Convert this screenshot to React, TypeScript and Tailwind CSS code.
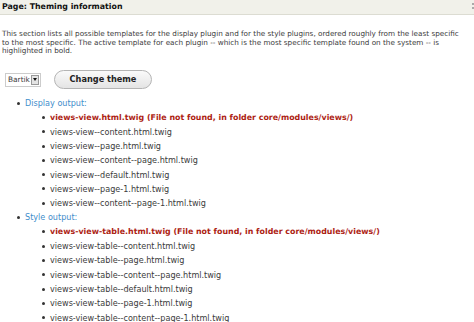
import React from "react";

const display = [
  "views-view--content.html.twig",
  "views-view--page.html.twig",
  "views-view--content--page.html.twig",
  "views-view--default.html.twig",
  "views-view--page-1.html.twig",
  "views-view--content--page-1.html.twig",
];
const style = [
  "views-view-table--content.html.twig",
  "views-view-table--page.html.twig",
  "views-view-table--content--page.html.twig",
  "views-view-table--default.html.twig",
  "views-view-table--page-1.html.twig",
  "views-view-table--content--page-1.html.twig",
];

function Bullet({ children }: { children: React.ReactNode }) {
  return (
    <li className="flex items-center h-[14.3px]">
      <span className="w-[3px] h-[3px] rounded-full bg-[#333] mr-[5px] shrink-0" />
      <span className="whitespace-nowrap">{children}</span>
    </li>
  );
}

export default function App() {
  return (
    <div
      className="w-[474px] h-[322px] bg-white overflow-hidden text-[#3b3b3b]"
      style={{ fontFamily: '"DejaVu Sans", sans-serif' }}
    >
      <div className="h-[15px] bg-[#f1f1ea] border-b border-[#dcdcd2] flex items-center pl-[2px] relative">
        <span className="font-bold text-[7.85px] text-[#111] leading-none">Page: Theming information</span>
        <span className="absolute right-0 top-[3px] w-[2px] h-[2px] bg-[#aaa]" />
        <span className="absolute right-0 top-[7px] w-[2px] h-[2px] bg-[#aaa]" />
      </div>
      <p className="text-[7.25px] leading-[8.5px] mt-[15px] pl-[2px] pr-[6px]">
        This section lists all possible templates for the display plugin and for the style plugins, ordered roughly from the least specific to the most specific. The active template for each plugin -- which is the most specific template found on the system -- is highlighted in bold.
      </p>
      <div className="flex items-center h-[19px] mt-[14.5px] pl-[5px]">
        <div className="flex items-center h-[14px] w-[36px] border border-[#ccc] bg-white pl-[2px] pr-[1px]">
          <span className="text-[7.4px] leading-none">Bartik</span>
          <span className="ml-auto w-[8px] h-[10px] bg-[#e4e4e4] border border-[#999] flex items-center justify-center">
            <span className="w-0 h-0 border-l-[2px] border-r-[2px] border-t-[3px] border-l-transparent border-r-transparent border-t-[#111]" />
          </span>
        </div>
        <button className="ml-[13px] h-[19px] w-[98px] rounded-full border border-[#b4b4b4] bg-gradient-to-b from-[#fafafa] to-[#e4e4e4] font-bold text-[8.2px] text-[#222] leading-none">
          Change theme
        </button>
      </div>
      <ul className="mt-[7px] pl-[17px] text-[8.1px]">
        <Bullet><span className="text-[#3f8ecb]">Display output:</span></Bullet>
        <li>
          <ul className="pl-[25px]">
            <Bullet><span className="font-bold text-[7.9px] text-[#ad1e14]">views-view.html.twig (File not found, in folder core/modules/views/)</span></Bullet>
            {display.map((d) => (
              <Bullet key={d}>{d}</Bullet>
            ))}
          </ul>
        </li>
        <Bullet><span className="text-[#3f8ecb]">Style output:</span></Bullet>
        <li>
          <ul className="pl-[25px]">
            <Bullet><span className="font-bold text-[7.9px] text-[#ad1e14]">views-view-table.html.twig (File not found, in folder core/modules/views/)</span></Bullet>
            {style.map((d) => (
              <Bullet key={d}>{d}</Bullet>
            ))}
          </ul>
        </li>
      </ul>
    </div>
  );
}
